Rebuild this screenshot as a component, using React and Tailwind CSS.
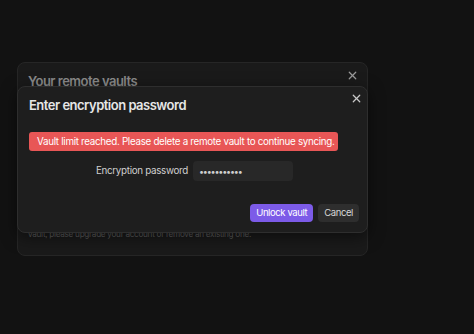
import { X } from 'lucide-react'

export default function App() {
  return (
    <div className="w-[474px] h-[334px] bg-[#121212] overflow-hidden font-['Inter',sans-serif] pt-[62px] pl-[17px]">
      <div className="relative w-[351px] h-[194px] rounded-lg border border-[#262626] bg-[#1a1a1a]">
        <div className="flex items-start justify-between pl-[10px] pr-[8px] pt-[9px]">
          <h2 className="text-[13px] tracking-[-0.5px] font-semibold text-[#8a8a8a] leading-[18px]">Your remote vaults</h2>
          <X className="w-[13px] h-[13px] text-[#9a9a9a] -mt-[3px]" strokeWidth={2.2} />
        </div>
        <p className="absolute left-[10px] top-[165px] text-[8.2px] tracking-[-0.3px] text-[#5e5e5e] leading-[12px] whitespace-nowrap">
          vault, please upgrade your account or remove an existing one.
        </p>

        {/* foreground dialog */}
        <div className="absolute left-[-1px] top-[23px] w-[351px] h-[147px] rounded-lg border border-[#2e2e2e] bg-[#1e1e1e] shadow-[0_4px_16px_rgba(0,0,0,0.5)]">
          <div className="flex items-start justify-between pl-[11px] pr-[4px] pt-[9px]">
            <h1 className="text-[13px] tracking-[-0.5px] font-semibold text-[#e6e6e6] leading-[18px]">Enter encryption password</h1>
            <X className="w-[13px] h-[13px] text-[#c8c8c8] -mt-[4px]" strokeWidth={2.2} />
          </div>
          <div className="ml-[11px] mt-[18px] w-[309px] h-[19px] rounded-[3px] bg-[#e85656] flex items-center pl-[8px]">
            <span className="text-[9.8px] tracking-[-0.3px] text-white leading-none whitespace-nowrap">
              Vault limit reached. Please delete a remote vault to continue syncing.
            </span>
          </div>
          <div className="flex items-center mt-[10px]">
            <span className="w-[170px] text-right text-[9.8px] tracking-[-0.3px] text-[#d0d0d0]">Encryption password</span>
            <div className="ml-[5px] w-[100px] h-[20px] rounded-[4px] bg-[#282828] flex items-center pl-[6px]">
              <span className="text-[9px] text-[#cfcfcf] tracking-[-1.2px] leading-none">•••••••••••</span>
            </div>
          </div>
          <div className="flex justify-end gap-[5px] pr-[8px] mt-[23px]">
            <button className="h-[18px] px-[6px] rounded-[4px] bg-[#7c5be8] text-white text-[9.5px] tracking-[-0.4px] leading-none">Unlock vault</button>
            <button className="h-[18px] px-[6px] rounded-[4px] bg-[#2e2e2e] text-[#d8d8d8] text-[9.5px] tracking-[-0.4px] leading-none">Cancel</button>
          </div>
        </div>
      </div>
    </div>
  )
}
